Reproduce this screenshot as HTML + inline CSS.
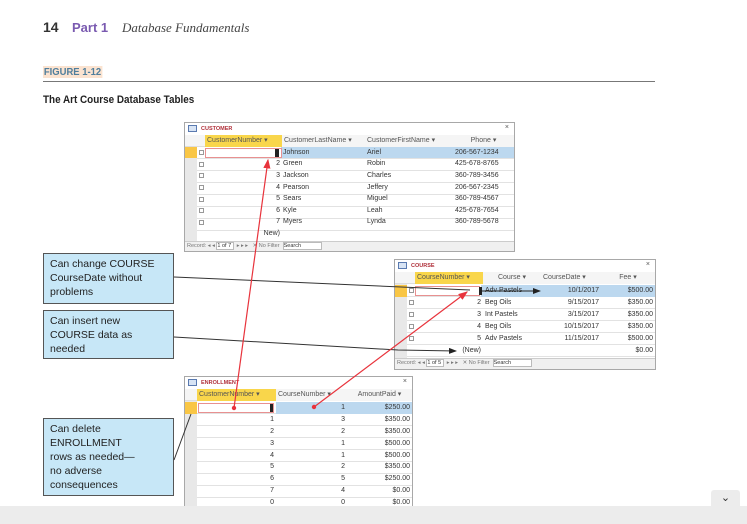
<!DOCTYPE html>
<html><head><meta charset="utf-8"><style>
*{margin:0;padding:0;box-sizing:border-box}
body{width:747px;height:524px;background:#fff;position:relative;overflow:hidden;font-family:"Liberation Sans",sans-serif}
.a{position:absolute;white-space:nowrap}
.win{position:absolute;background:#fff;border:1px solid #a8a8a8}
.c{position:absolute;font-size:7px;color:#333;line-height:12px;height:12px;white-space:nowrap;overflow:hidden}
.r{text-align:right;padding-right:2px}
.hd{background:#f5f5f5;color:#555;font-size:7px}
.box{position:absolute;background:#c7e7f7;border:1px solid #555;font-size:10.5px;line-height:14px;color:#222;padding:3px 6px;white-space:normal}
.tab{position:absolute;font-size:5.5px;font-weight:bold;color:#b0303a}
.grid{position:absolute;background:repeating-linear-gradient(to bottom,transparent 0,transparent 11px,#e2e2e2 11px,#e2e2e2 12px)}
.ex{position:absolute;width:5px;height:5px;border:1px solid #999;background:#fff}
</style></head><body>
<div class="a" style="left:43px;top:19px;font-size:14px;font-weight:bold;color:#333">14</div>
<div class="a" style="left:72px;top:20px;font-size:13px;font-weight:bold;color:#7a5ab0">Part 1</div>
<div class="a" style="left:122px;top:20px;font-size:13px;font-style:italic;font-family:'Liberation Serif',serif;color:#444">Database Fundamentals</div>
<div class="a" style="left:43px;top:66px;font-size:10.5px;font-weight:bold;color:#4f7e9c;background:#fbe3d0;padding:0 1px;transform:scaleX(.9);transform-origin:left">FIGURE 1-12</div>
<div class="a" style="left:43px;top:81px;width:612px;height:1px;background:#777"></div>
<div class="a" style="left:43px;top:94px;font-size:11px;font-weight:bold;color:#222;transform:scaleX(.9);transform-origin:left">The Art Course Database Tables</div>

<!-- CUSTOMER -->
<div class="win" style="left:184px;top:122px;width:331px;height:130px">
<div class="a" style="left:3px;top:2px;width:9px;height:7px;border:1px solid #5a7ab0;background:#d8e4f4"></div>
<div class="tab" style="left:16px;top:3px">CUSTOMER</div>
<div class="a" style="right:5px;top:1px;font-size:7px;color:#555">×</div>
<div class="a" style="left:0;top:12px;width:329px;height:12px;background:#f5f5f5;border-bottom:1px solid #ddd"></div>
<div class="c hd" style="left:20px;top:12px;width:77px;background:#f9d64b;padding-left:2px">CustomerNumber ▾</div>
<div class="c hd" style="left:97px;top:12px;width:83px;padding-left:2px">CustomerLastName ▾</div>
<div class="c hd" style="left:180px;top:12px;width:88px;padding-left:2px">CustomerFirstName ▾</div>
<div class="c hd" style="left:268px;top:12px;width:61px;text-align:center">Phone ▾</div>
<div class="grid" style="left:12px;top:24px;width:317px;height:94px"></div>
<div class="a" style="left:0;top:24px;width:12px;height:94px;background:#e8e8e8"></div>
<div class="a" style="left:0;top:24px;width:12px;height:11px;background:#f9c645"></div>
<div class="a" style="left:96px;top:24px;width:233px;height:11px;background:#bcd8ef"></div>
<div class="a" style="left:20px;top:25px;width:77px;height:10px;border:1px solid #e89090;background:#fff"></div>
<div class="a" style="left:90px;top:26px;width:4px;height:8px;background:#222"></div>
<div class="ex" style="left:14px;top:27px"></div><div class="ex" style="left:14px;top:39px"></div><div class="ex" style="left:14px;top:50px"></div><div class="ex" style="left:14px;top:62px"></div><div class="ex" style="left:14px;top:74px"></div><div class="ex" style="left:14px;top:85px"></div><div class="ex" style="left:14px;top:97px"></div>
<div class="c r" style="left:20px;top:35px;width:77px">2</div>
<div class="c r" style="left:20px;top:47px;width:77px">3</div>
<div class="c r" style="left:20px;top:59px;width:77px">4</div>
<div class="c r" style="left:20px;top:70px;width:77px">5</div>
<div class="c r" style="left:20px;top:82px;width:77px">6</div>
<div class="c r" style="left:20px;top:93px;width:77px">7</div>
<div class="c r" style="left:20px;top:105px;width:77px">New)</div>
<div class="c" style="left:98px;top:24px">Johnson</div><div class="c" style="left:182px;top:24px">Ariel</div><div class="c" style="left:270px;top:24px">206-567-1234</div>
<div class="c" style="left:98px;top:35px">Green</div><div class="c" style="left:182px;top:35px">Robin</div><div class="c" style="left:270px;top:35px">425-678-8765</div>
<div class="c" style="left:98px;top:47px">Jackson</div><div class="c" style="left:182px;top:47px">Charles</div><div class="c" style="left:270px;top:47px">360-789-3456</div>
<div class="c" style="left:98px;top:59px">Pearson</div><div class="c" style="left:182px;top:59px">Jeffery</div><div class="c" style="left:270px;top:59px">206-567-2345</div>
<div class="c" style="left:98px;top:70px">Sears</div><div class="c" style="left:182px;top:70px">Miguel</div><div class="c" style="left:270px;top:70px">360-789-4567</div>
<div class="c" style="left:98px;top:82px">Kyle</div><div class="c" style="left:182px;top:82px">Leah</div><div class="c" style="left:270px;top:82px">425-678-7654</div>
<div class="c" style="left:98px;top:93px">Myers</div><div class="c" style="left:182px;top:93px">Lynda</div><div class="c" style="left:270px;top:93px">360-789-5678</div>
<div class="a" style="left:0;top:118px;width:329px;height:10px;background:#f0f0f0;border-top:1px solid #ccc;font-size:5.5px;color:#777;line-height:9px;padding-left:2px">Record: ◂ ◂ <span style="background:#fff;border:1px solid #bbb;color:#333">1 of 7 </span>&nbsp; ▸ ▸ ▸ &nbsp; ✕ No Filter &nbsp;<span style="background:#fff;border:1px solid #bbb;color:#333;padding-right:20px">Search</span></div>
</div>

<!-- COURSE -->
<div class="win" style="left:394px;top:259px;width:262px;height:111px">
<div class="a" style="left:3px;top:2px;width:9px;height:7px;border:1px solid #5a7ab0;background:#d8e4f4"></div>
<div class="tab" style="left:16px;top:3px">COURSE</div>
<div class="a" style="right:5px;top:1px;font-size:7px;color:#555">×</div>
<div class="a" style="left:0;top:12px;width:260px;height:12px;background:#f5f5f5;border-bottom:1px solid #ddd"></div>
<div class="c hd" style="left:20px;top:12px;width:68px;background:#f9d64b;padding-left:2px">CourseNumber ▾</div>
<div class="c hd" style="left:88px;top:12px;width:58px;text-align:center">Course ▾</div>
<div class="c hd" style="left:146px;top:12px;width:60px;padding-left:2px">CourseDate ▾</div>
<div class="c hd" style="left:206px;top:12px;width:54px;text-align:center">Fee ▾</div>
<div class="grid" style="left:12px;top:25px;width:248px;height:73px"></div>
<div class="a" style="left:0;top:24px;width:12px;height:75px;background:#e8e8e8"></div>
<div class="a" style="left:0;top:25px;width:12px;height:12px;background:#f9c645"></div>
<div class="a" style="left:86px;top:25px;width:174px;height:12px;background:#bcd8ef"></div>
<div class="a" style="left:20px;top:26px;width:65px;height:10px;border:1px solid #e89090"></div>
<div class="a" style="left:84px;top:27px;width:3px;height:8px;background:#222"></div>
<div class="ex" style="left:14px;top:28px"></div><div class="ex" style="left:14px;top:40px"></div><div class="ex" style="left:14px;top:52px"></div><div class="ex" style="left:14px;top:64px"></div><div class="ex" style="left:14px;top:76px"></div>
<div class="c" style="left:90px;top:25px">Adv Pastels</div><div class="c r" style="left:146px;top:25px;width:60px">10/1/2017</div><div class="c r" style="left:206px;top:25px;width:54px">$500.00</div>
<div class="c r" style="left:20px;top:37px;width:68px">2</div><div class="c" style="left:90px;top:37px">Beg Oils</div><div class="c r" style="left:146px;top:37px;width:60px">9/15/2017</div><div class="c r" style="left:206px;top:37px;width:54px">$350.00</div>
<div class="c r" style="left:20px;top:49px;width:68px">3</div><div class="c" style="left:90px;top:49px">Int Pastels</div><div class="c r" style="left:146px;top:49px;width:60px">3/15/2017</div><div class="c r" style="left:206px;top:49px;width:54px">$350.00</div>
<div class="c r" style="left:20px;top:61px;width:68px">4</div><div class="c" style="left:90px;top:61px">Beg Oils</div><div class="c r" style="left:146px;top:61px;width:60px">10/15/2017</div><div class="c r" style="left:206px;top:61px;width:54px">$350.00</div>
<div class="c r" style="left:20px;top:73px;width:68px">5</div><div class="c" style="left:90px;top:73px">Adv Pastels</div><div class="c r" style="left:146px;top:73px;width:60px">11/15/2017</div><div class="c r" style="left:206px;top:73px;width:54px">$500.00</div>
<div class="c r" style="left:20px;top:85px;width:68px">(New)</div><div class="c r" style="left:206px;top:85px;width:54px">$0.00</div>
<div class="a" style="left:0;top:98px;width:260px;height:11px;background:#f0f0f0;border-top:1px solid #ccc;font-size:5.5px;color:#777;line-height:9px;padding-left:2px">Record: ◂ ◂ <span style="background:#fff;border:1px solid #bbb;color:#333">1 of 5 </span>&nbsp; ▸ ▸ ▸ &nbsp; ✕ No Filter &nbsp;<span style="background:#fff;border:1px solid #bbb;color:#333;padding-right:20px">Search</span></div>
</div>

<!-- ENROLLMENT -->
<div class="win" style="left:184px;top:376px;width:229px;height:140px">
<div class="a" style="left:3px;top:2px;width:9px;height:7px;border:1px solid #5a7ab0;background:#d8e4f4"></div>
<div class="tab" style="left:16px;top:3px">ENROLLMENT</div>
<div class="a" style="right:5px;top:1px;font-size:7px;color:#555">×</div>
<div class="a" style="left:0;top:12px;width:227px;height:12px;background:#f5f5f5;border-bottom:1px solid #ddd"></div>
<div class="c hd" style="left:12px;top:12px;width:79px;background:#f9d64b;padding-left:2px">CustomerNumber ▾</div>
<div class="c hd" style="left:91px;top:12px;width:71px;padding-left:2px">CourseNumber ▾</div>
<div class="c hd" style="left:162px;top:12px;width:65px;text-align:center">AmountPaid ▾</div>
<div class="grid" style="left:12px;top:25px;width:215px;height:115px"></div>
<div class="a" style="left:0;top:24px;width:12px;height:116px;background:#e8e8e8"></div>
<div class="a" style="left:0;top:25px;width:12px;height:12px;background:#f9c645"></div>
<div class="a" style="left:91px;top:25px;width:136px;height:12px;background:#bcd8ef"></div>
<div class="a" style="left:13px;top:26px;width:76px;height:10px;border:1px solid #e89090"></div>
<div class="a" style="left:85px;top:27px;width:3px;height:8px;background:#222"></div>
<div class="c r" style="left:91px;top:25px;width:71px">1</div><div class="c r" style="left:162px;top:25px;width:65px">$250.00</div>
<div class="c r" style="left:12px;top:37px;width:79px">1</div><div class="c r" style="left:91px;top:37px;width:71px">3</div><div class="c r" style="left:162px;top:37px;width:65px">$350.00</div>
<div class="c r" style="left:12px;top:49px;width:79px">2</div><div class="c r" style="left:91px;top:49px;width:71px">2</div><div class="c r" style="left:162px;top:49px;width:65px">$350.00</div>
<div class="c r" style="left:12px;top:61px;width:79px">3</div><div class="c r" style="left:91px;top:61px;width:71px">1</div><div class="c r" style="left:162px;top:61px;width:65px">$500.00</div>
<div class="c r" style="left:12px;top:73px;width:79px">4</div><div class="c r" style="left:91px;top:73px;width:71px">1</div><div class="c r" style="left:162px;top:73px;width:65px">$500.00</div>
<div class="c r" style="left:12px;top:84px;width:79px">5</div><div class="c r" style="left:91px;top:84px;width:71px">2</div><div class="c r" style="left:162px;top:84px;width:65px">$350.00</div>
<div class="c r" style="left:12px;top:96px;width:79px">6</div><div class="c r" style="left:91px;top:96px;width:71px">5</div><div class="c r" style="left:162px;top:96px;width:65px">$250.00</div>
<div class="c r" style="left:12px;top:108px;width:79px">7</div><div class="c r" style="left:91px;top:108px;width:71px">4</div><div class="c r" style="left:162px;top:108px;width:65px">$0.00</div>
<div class="c r" style="left:12px;top:120px;width:79px">0</div><div class="c r" style="left:91px;top:120px;width:71px">0</div><div class="c r" style="left:162px;top:120px;width:65px">$0.00</div>
</div>

<div class="box" style="left:43px;top:253px;width:131px;height:51px">Can change COURSE CourseDate without problems</div>
<div class="box" style="left:43px;top:310px;width:131px;height:49px;padding-right:30px">Can insert new COURSE data as needed</div>
<div class="box" style="left:43px;top:418px;width:131px;height:78px;padding-right:38px">Can delete ENROLLMENT rows as needed—no adverse consequences</div>

<svg class="a" style="left:0;top:0" width="747" height="524">
<defs><marker id="k" markerWidth="8" markerHeight="6" refX="7" refY="3" orient="auto"><path d="M0,0L8,3L0,6z" fill="#222"/></marker>
<marker id="rd" markerWidth="8" markerHeight="6" refX="7" refY="3" orient="auto"><path d="M0,0L8,3L0,6z" fill="#e8333c"/></marker></defs>
<path d="M174,277L470,290" stroke="#333" stroke-width="1" fill="none"/>
<path d="M480,291L540,291" stroke="#222" stroke-width="1" marker-end="url(#k)"/>
<path d="M174,337L398,350L456,351" stroke="#333" stroke-width="1" fill="none" marker-end="url(#k)"/>
<path d="M174,460L191,414" stroke="#333" stroke-width="1"/>
<path d="M234,408L268,160" stroke="#e8333c" stroke-width="1.2" marker-end="url(#rd)"/>
<path d="M314,407L467,292" stroke="#e8333c" stroke-width="1.2" marker-end="url(#rd)"/>
<circle cx="234" cy="408" r="2.2" fill="#e8333c"/><circle cx="314" cy="407" r="2.2" fill="#e8333c"/>
</svg>

<div class="a" style="left:0;top:506px;width:747px;height:18px;background:#ececec"></div>
<div class="a" style="left:711px;top:490px;width:29px;height:16px;background:#ececec;border-radius:3px 3px 0 0;font-size:11px;color:#333;text-align:center;line-height:16px">⌄</div>
</body></html>
